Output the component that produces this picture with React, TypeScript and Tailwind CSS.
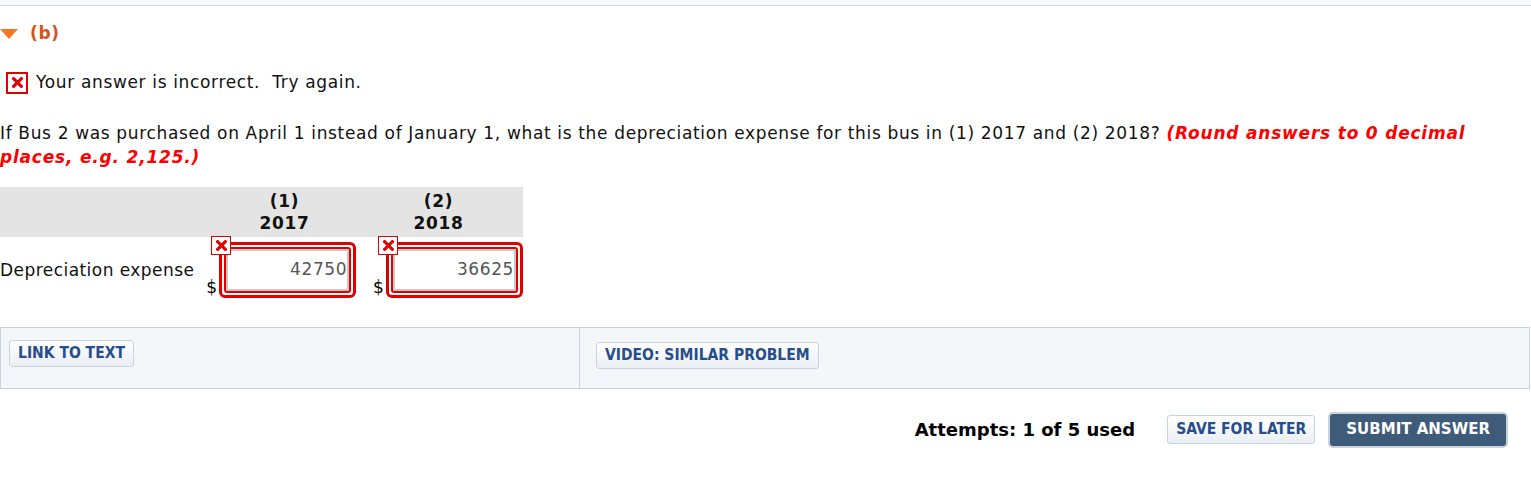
const XMark = ({ size = 10 }: { size?: number }) => (
  <svg width={size} height={size} viewBox="0 0 10 10">
    <path d="M1.5 1.5 L8.5 8.5 M8.5 1.5 L1.5 8.5" stroke="#e00000" strokeWidth="2.8" strokeLinecap="square" />
  </svg>
);

const AnswerBox = ({ value }: { value: string }) => (
  <div className="flex items-end">
    <span className="text-[17px] leading-none text-black mb-[2px] w-[13px]">$</span>
    <div className="relative">
      {/* red x marker */}
      <div className="absolute -left-[8px] -top-[6px] z-10 w-[20px] h-[19px] bg-white border border-[#e00000] flex items-center justify-center">
        <XMark size={11} />
      </div>
      <div className="rounded-[6px] border-[3px] border-[#e00000] p-[2px] bg-white">
        <div className="rounded-[3px] border-[2px] border-[#e00000]">
          <div className="w-[123px] h-[42px] border-2 border-[#c8c8c8] bg-white flex items-center justify-end pr-[0px] text-[17px] tracking-[0.6px] text-[#555]">
            {value}
          </div>
        </div>
      </div>
    </div>
  </div>
);

const LightButton = ({ children, className = '' }: { children: React.ReactNode; className?: string }) => (
  <button
    className={`rounded-[3px] border border-[#c9d3de] bg-gradient-to-b from-white to-[#eaeff4] text-[#264d8c] font-bold text-[15.5px] ${className}`}
    style={{ fontFamily: '"DejaVu Sans Condensed", "DejaVu Sans", sans-serif' }}
  >
    {children}
  </button>
);

export default function App() {
  return (
    <div
      className="w-[1531px] h-[482px] bg-white text-[#111] text-[17px] tracking-[0.65px]"
      style={{ fontFamily: '"DejaVu Sans", Verdana, sans-serif' }}
    >
      {/* top strip */}
      <div className="h-[6px] bg-[#f6f8fa] border-b border-[#d3dbe4]" />

      {/* part header */}
      <div className="flex items-center gap-[12px] pt-[16px] h-[40px]">
        <div className="w-0 h-0 border-l-[9px] border-r-[9px] border-t-[10px] border-l-transparent border-r-transparent border-t-[#f47a1f]" />
        <span className="text-[#d4541b] font-bold">(b)</span>
      </div>

      {/* feedback */}
      <div className="flex items-center mt-[24px] pl-[6px] gap-[8px]">
        <div className="w-[22px] h-[22px] border-2 border-[#e00000] flex items-center justify-center bg-white">
          <XMark size={11} />
        </div>
        <span className="whitespace-pre">Your answer is incorrect.  Try again.</span>
      </div>

      {/* question */}
      <p className="mt-[25px] leading-[24px] pr-[60px]">
        If Bus 2 was purchased on April 1 instead of January 1, what is the depreciation expense for this bus in (1) 2017 and (2) 2018?{' '}
        <span className="text-[#ff0000] font-bold italic tracking-[0.8px]">(Round answers to 0 decimal places, e.g. 2,125.)</span>
      </p>

      {/* table */}
      <div className="mt-[18px] w-[523px]">
        <div className="h-[50px] bg-[#e4e4e4] flex font-bold leading-[22px]">
          <div className="w-[207px]" />
          <div className="w-[153px] flex flex-col items-center justify-center pl-[2px]">
            <span>(1)</span>
            <span>2017</span>
          </div>
          <div className="w-[163px] flex flex-col items-center justify-center pr-[6px]">
            <span>(2)</span>
            <span>2018</span>
          </div>
        </div>
        <div className="flex items-start pt-[5px]">
          <div className="w-[208px] pt-[16px] whitespace-nowrap tracking-[0.45px]">Depreciation expense</div>
          <AnswerBox value="42750" />
          <div className="w-[17px]" />
          <AnswerBox value="36625" />
        </div>
      </div>

      {/* resources panel */}
      <div className="mt-[29px] mr-[1px] h-[62px] border border-[#c9d3de] bg-[#f3f7fa] flex tracking-normal">
        <div className="w-[579px] border-r border-[#c9d3de] pl-[8px] pt-[12px]">
          <LightButton className="h-[27px] px-[8px]">LINK TO TEXT</LightButton>
        </div>
        <div className="flex-1 pl-[16px] pt-[14px]">
          <LightButton className="h-[27px] px-[8px]">VIDEO: SIMILAR PROBLEM</LightButton>
        </div>
      </div>

      {/* footer */}
      <div className="flex items-center justify-end pr-[25px] mt-[25px] tracking-normal">
        <span className="font-bold text-[18px] text-black mr-[32px]">Attempts: 1 of 5 used</span>
        <LightButton className="h-[29px] px-[8px] mr-[15px]">SAVE FOR LATER</LightButton>
        <button
          className="h-[32px] px-[16px] rounded-[3px] bg-[#3e5b7a] text-white font-bold text-[15px] shadow-[0_0_0_2px_#c9d3de]"
          style={{ fontFamily: '"DejaVu Sans", sans-serif' }}
        >
          SUBMIT ANSWER
        </button>
      </div>
    </div>
  );
}
